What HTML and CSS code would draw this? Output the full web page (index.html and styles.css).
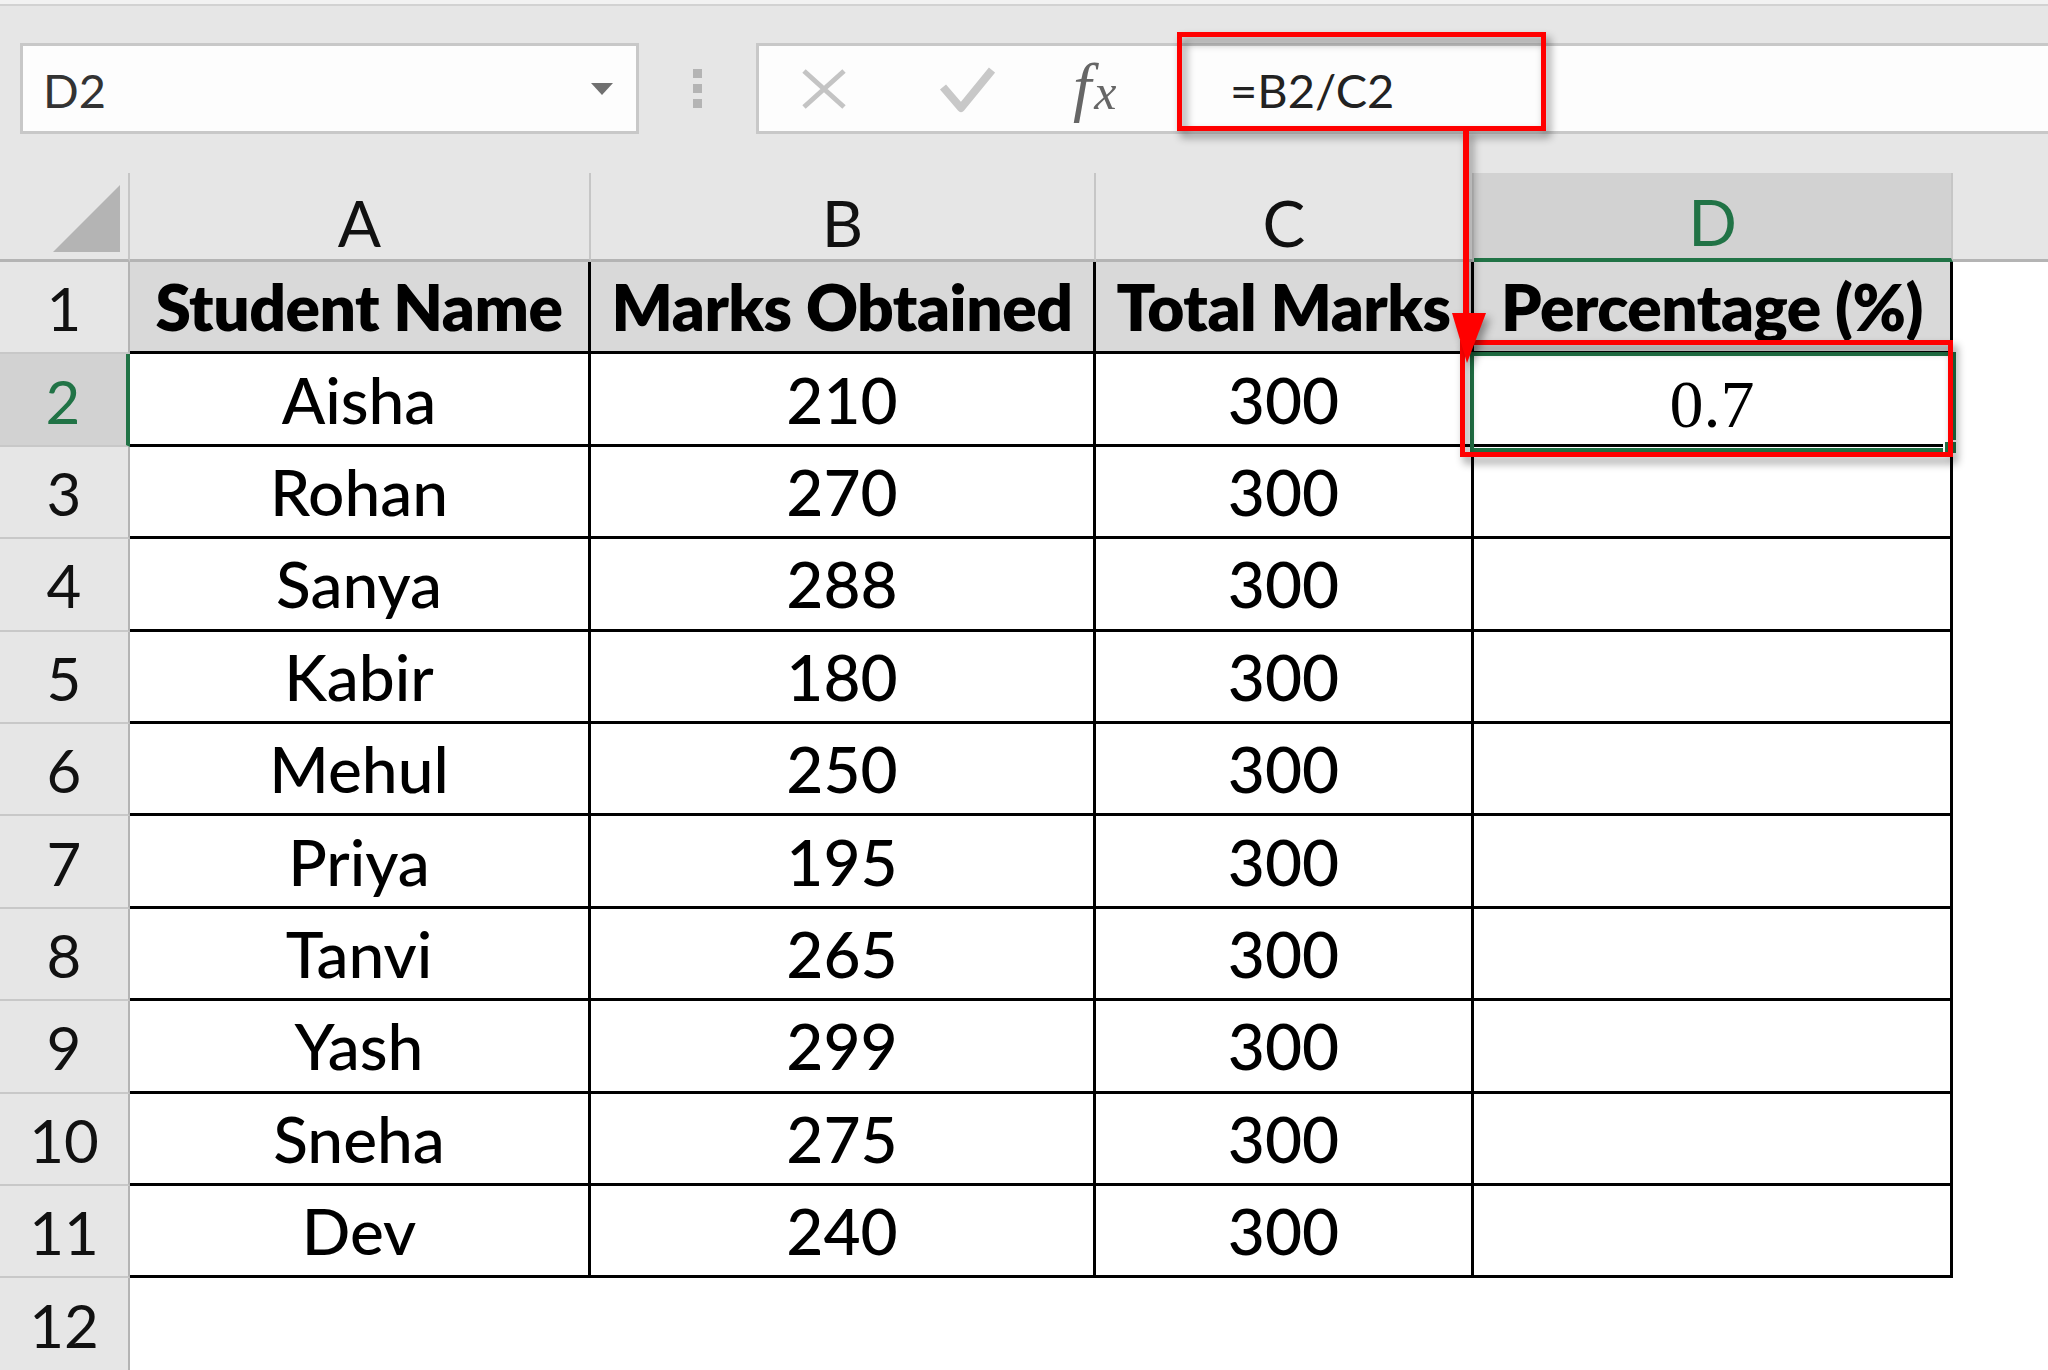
FILE: index.html
```html
<!DOCTYPE html>
<html lang="en">
<head>
<meta charset="utf-8">
<title>Percentage formula</title>
<link rel="stylesheet" href="styles.css">
</head>
<body>
<div class="app">
  <div class="topstrip"></div>
  <div class="formula-row">
    <div class="namebox">
      <span class="nb-text">D2</span>
      <span class="nb-arrow"></span>
    </div>
    <div class="grip"><i></i><i></i><i></i></div>
    <div class="formulabar">
      <svg class="ic-x" width="48" height="42" viewBox="0 0 48 42"><path d="M4 3 L44 39 M44 3 L4 39" stroke="#c4c4c4" stroke-width="5" fill="none"/></svg>
      <svg class="ic-check" width="56" height="48" viewBox="0 0 56 48"><path d="M4 22 L22 43 L53 5" stroke="#c8c8c8" stroke-width="8" fill="none" stroke-linejoin="round"/></svg>
      <span class="fx">f<span class="fx-x">x</span></span>
      <span class="formula">=B2/C2</span>
    </div>
  </div>

  <div class="sheet">
    <div class="corner"><svg width="67" height="67" viewBox="0 0 67 67"><polygon points="0,67 67,67 67,0" fill="#b4b4b4"/></svg></div>
    <div class="ch">A</div><div class="ch">B</div><div class="ch">C</div><div class="ch sel">D</div><div class="ch blank"></div>

    <div class="rh">1</div>
    <div class="c h">Student Name</div><div class="c h">Marks Obtained</div><div class="c h">Total Marks</div><div class="c h">Percentage (%)</div><div class="e"></div>

    <div class="rh sel">2</div>
    <div class="c">Aisha</div><div class="c">210</div><div class="c">300</div><div class="c serif">0.7</div><div class="e"></div>

    <div class="rh">3</div>
    <div class="c">Rohan</div><div class="c">270</div><div class="c">300</div><div class="c"></div><div class="e"></div>

    <div class="rh">4</div>
    <div class="c">Sanya</div><div class="c">288</div><div class="c">300</div><div class="c"></div><div class="e"></div>

    <div class="rh">5</div>
    <div class="c">Kabir</div><div class="c">180</div><div class="c">300</div><div class="c"></div><div class="e"></div>

    <div class="rh">6</div>
    <div class="c">Mehul</div><div class="c">250</div><div class="c">300</div><div class="c"></div><div class="e"></div>

    <div class="rh">7</div>
    <div class="c">Priya</div><div class="c">195</div><div class="c">300</div><div class="c"></div><div class="e"></div>

    <div class="rh">8</div>
    <div class="c">Tanvi</div><div class="c">265</div><div class="c">300</div><div class="c"></div><div class="e"></div>

    <div class="rh">9</div>
    <div class="c">Yash</div><div class="c">299</div><div class="c">300</div><div class="c"></div><div class="e"></div>

    <div class="rh">10</div>
    <div class="c">Sneha</div><div class="c">275</div><div class="c">300</div><div class="c"></div><div class="e"></div>

    <div class="rh">11</div>
    <div class="c">Dev</div><div class="c">240</div><div class="c">300</div><div class="c"></div><div class="e"></div>

    <div class="rh last">12</div>
    <div class="e"></div><div class="e"></div><div class="e"></div><div class="e"></div><div class="e"></div>
  </div>

  <div class="selection"></div>
  <div class="fill-handle"></div>
  <div class="callout callout-formula"></div>
  <div class="callout callout-cell"></div>
  <svg class="arrow" width="60" height="245" viewBox="0 0 60 245">
    <line x1="26" y1="6" x2="26" y2="192" stroke="#ff0000" stroke-width="6"/>
    <polygon points="12,188 46,188 27,238" fill="#ff0000"/>
  </svg>
</div>
</body>
</html>
```

FILE: styles.css
```css
* { box-sizing: border-box; }

body {
  margin: 0;
  background: #e6e6e6;
  font-family: Lato, "Open Sans", sans-serif;
  color: #000;
}

.app {
  position: relative;
  width: 2048px;
  height: 1370px;
  overflow: hidden;
}

.topstrip {
  height: 6px;
  background: #f2f2f2;
  border-bottom: 2px solid #d2d2d2;
}

/* ---------- formula row ---------- */
.formula-row {
  display: flex;
  height: 91px;
  margin-top: 37px;
}

.namebox {
  width: 619px;
  margin-left: 20px;
  border: 3px solid #c8c8c8;
  background: #fdfdfd;
  display: flex;
  align-items: center;
  padding-left: 20px;
}

.nb-text {
  font-size: 47px;
  color: #333;
  padding-top: 3px;
}

.nb-arrow {
  margin-left: auto;
  margin-right: 23px;
  width: 0;
  height: 0;
  border-left: 11px solid transparent;
  border-right: 11px solid transparent;
  border-top: 12px solid #707070;
}

.grip {
  width: 117px;
  display: flex;
  flex-direction: column;
  align-items: center;
  justify-content: center;
  gap: 6px;
}

.grip i {
  display: block;
  width: 9px;
  height: 9px;
  background: #b4b4b4;
}

.formulabar {
  flex: 1;
  margin-right: -20px;
  border: 3px solid #c8c8c8;
  background: #fdfdfd;
  display: flex;
  align-items: center;
}

.ic-x { margin-left: 41px; }
.ic-check { margin-left: 91px; }

.fx {
  margin-left: 78px;
  width: 56px;
  font-family: "Liberation Serif", serif;
  font-style: italic;
  font-size: 66px;
  color: #666;
  letter-spacing: 3px;
  line-height: 1;
  padding-bottom: 4px;
}

.fx-x { font-size: 50px; }

.formula {
  margin-left: 101px;
  font-size: 47px;
  color: #222;
  padding-top: 3px;
}

/* ---------- sheet grid ---------- */
.sheet {
  display: grid;
  margin-top: 39px;
  height: 1197px;
  grid-template-columns: 130px 461px 505px 378px 479px 95px;
  grid-template-rows: 89px repeat(11, 92.4px) 1fr;
}

.corner {
  display: flex;
  align-items: flex-end;
  justify-content: flex-end;
  padding: 0 8px 7px 0;
  border-right: 2px solid #c6c6c6;
  border-bottom: 3px solid #b4b4b4;
}

.corner svg { display: block; }

.ch {
  display: flex;
  align-items: center;
  justify-content: center;
  padding-top: 12px;
  font-size: 64px;
  color: #111;
  border-right: 2px solid #c6c6c6;
  border-bottom: 3px solid #b4b4b4;
}

.ch.sel {
  background: #d2d2d2;
  color: #217346;
  border-bottom: 4px solid #217346;
}

.ch.blank { border-right: none; }

.rh {
  display: flex;
  align-items: center;
  justify-content: center;
  padding-top: 2px;
  font-size: 60px;
  color: #111;
  border-right: 2px solid #b4b4b4;
  border-bottom: 2px solid #c8c8c8;
}

.rh.sel {
  background: #d2d2d2;
  color: #217346;
  border-right: 4px solid #217346;
}

.rh.last { border-bottom: none; }

.c {
  display: flex;
  align-items: center;
  justify-content: center;
  white-space: nowrap;
  background: #fff;
  font-size: 64px;
  font-weight: 500;
  border-right: 3px solid #000;
  border-bottom: 3px solid #000;
}

.c.h {
  background: #d9d9d9;
  font-weight: 800;
  letter-spacing: -0.5px;
}

.c.serif {
  font-family: "Liberation Serif", serif;
  font-size: 68px;
  font-weight: 400;
  padding-top: 10px;
}

.e { background: #fff; }

/* ---------- overlays ---------- */
.selection {
  position: absolute;
  left: 1470px;
  top: 352px;
  width: 486px;
  height: 100px;
  border: 4px solid #217346;
}

.fill-handle {
  position: absolute;
  left: 1943px;
  top: 440px;
  width: 15px;
  height: 15px;
  background: #217346;
  border: 2px solid #fff;
}

.callout {
  position: absolute;
  border: 5px solid #ff0000;
  filter: drop-shadow(4px 6px 4px rgba(0, 0, 0, 0.45));
}

.callout-formula {
  left: 1177px;
  top: 32px;
  width: 369px;
  height: 99px;
}

.callout-cell {
  left: 1460px;
  top: 340px;
  width: 493px;
  height: 117px;
}

.arrow {
  position: absolute;
  left: 1440px;
  top: 125px;
  filter: drop-shadow(4px 5px 4px rgba(0, 0, 0, 0.4));
}
```
